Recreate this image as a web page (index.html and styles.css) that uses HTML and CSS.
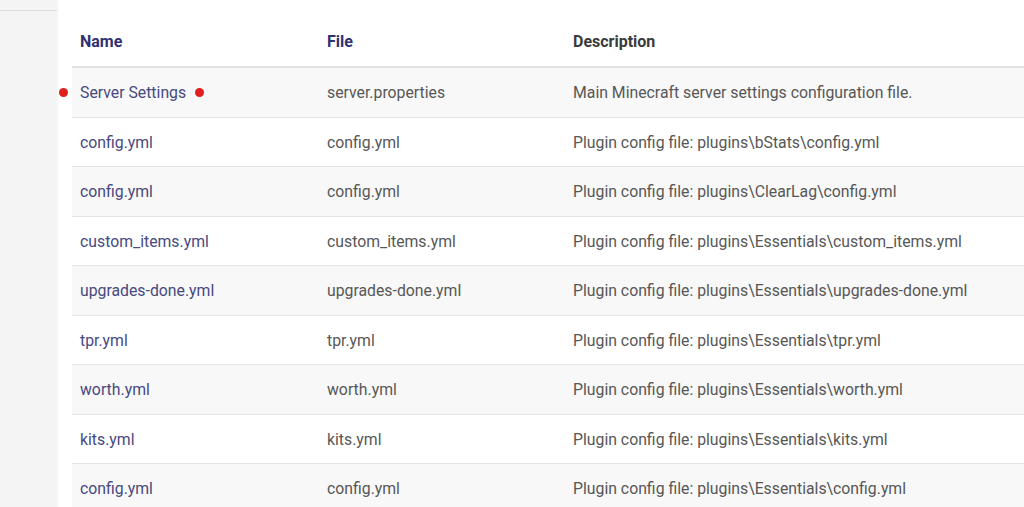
FILE: index.html
```html
<!DOCTYPE html>
<html>
<head>
<meta charset="utf-8">
<link rel="stylesheet" href="styles.css">
</head>
<body>
<div class="layout">
  <aside class="sidebar"><div class="sidebar-top"></div></aside>
  <main class="main">
    <table class="files">
      <thead>
        <tr>
          <th class="col-name accent">Name</th>
          <th class="col-file accent">File</th>
          <th class="col-desc">Description</th>
        </tr>
      </thead>
      <tbody>
        <tr class="alt">
          <td class="name"><span class="dot dot-left"></span>Server Settings<span class="dot dot-inline"></span></td>
          <td>server.properties</td>
          <td>Main Minecraft server settings configuration file.</td>
        </tr>
        <tr>
          <td class="name">config.yml</td>
          <td>config.yml</td>
          <td>Plugin config file: plugins\bStats\config.yml</td>
        </tr>
        <tr class="alt">
          <td class="name">config.yml</td>
          <td>config.yml</td>
          <td>Plugin config file: plugins\ClearLag\config.yml</td>
        </tr>
        <tr>
          <td class="name">custom_items.yml</td>
          <td>custom_items.yml</td>
          <td>Plugin config file: plugins\Essentials\custom_items.yml</td>
        </tr>
        <tr class="alt">
          <td class="name">upgrades-done.yml</td>
          <td>upgrades-done.yml</td>
          <td>Plugin config file: plugins\Essentials\upgrades-done.yml</td>
        </tr>
        <tr>
          <td class="name">tpr.yml</td>
          <td>tpr.yml</td>
          <td>Plugin config file: plugins\Essentials\tpr.yml</td>
        </tr>
        <tr class="alt">
          <td class="name">worth.yml</td>
          <td>worth.yml</td>
          <td>Plugin config file: plugins\Essentials\worth.yml</td>
        </tr>
        <tr>
          <td class="name">kits.yml</td>
          <td>kits.yml</td>
          <td>Plugin config file: plugins\Essentials\kits.yml</td>
        </tr>
        <tr class="alt">
          <td class="name">config.yml</td>
          <td>config.yml</td>
          <td>Plugin config file: plugins\Essentials\config.yml</td>
        </tr>
      </tbody>
    </table>
  </main>
</div>
</body>
</html>
```

FILE: styles.css
```css
html, body {
  margin: 0;
  padding: 0;
  background: #ffffff;
  font-family: Roboto, "Liberation Sans", sans-serif;
  overflow: hidden;
}

.layout {
  display: flex;
  height: 507px;
}

.sidebar {
  width: 57px;
  flex: 0 0 57px;
  background: #f4f4f5;
  box-shadow: 1px 0 2px rgba(0,0,0,0.04);
}

.sidebar-top {
  height: 10px;
  border-bottom: 1px solid #dcdcdc;
}

.main {
  flex: 1;
  padding: 17px 0 0 15px;
}

.files {
  width: 100%;
  border-collapse: collapse;
  table-layout: fixed;
}

.col-name { width: 231px; }
.col-file { width: 230px; }

.files th {
  text-align: left;
  font-size: 16px;
  font-weight: 700;
  color: #3a3a3a;
  padding: 0 8px;
  height: 49px;
  border-bottom: 2px solid #e2e2e2;
  vertical-align: middle;
}

.files th.accent {
  color: #2f3170;
}

.files td {
  font-size: 15.8px;
  color: #575757;
  padding: 1px 8px 0;
  height: 47.5px;
  border-bottom: 1px solid #e4e4e4;
  vertical-align: middle;
  white-space: nowrap;
}

.files tr.alt td {
  background: #f8f8f8;
}

.files td.name {
  color: #47497f;
  position: relative;
}

.dot {
  display: inline-block;
  width: 9px;
  height: 9px;
  border-radius: 50%;
  background: #e01f1f;
}

.dot-inline {
  margin-left: 9px;
  vertical-align: 1px;
}

.dot-left {
  position: absolute;
  left: -13px;
  top: 50%;
  margin-top: -4px;
}
```
